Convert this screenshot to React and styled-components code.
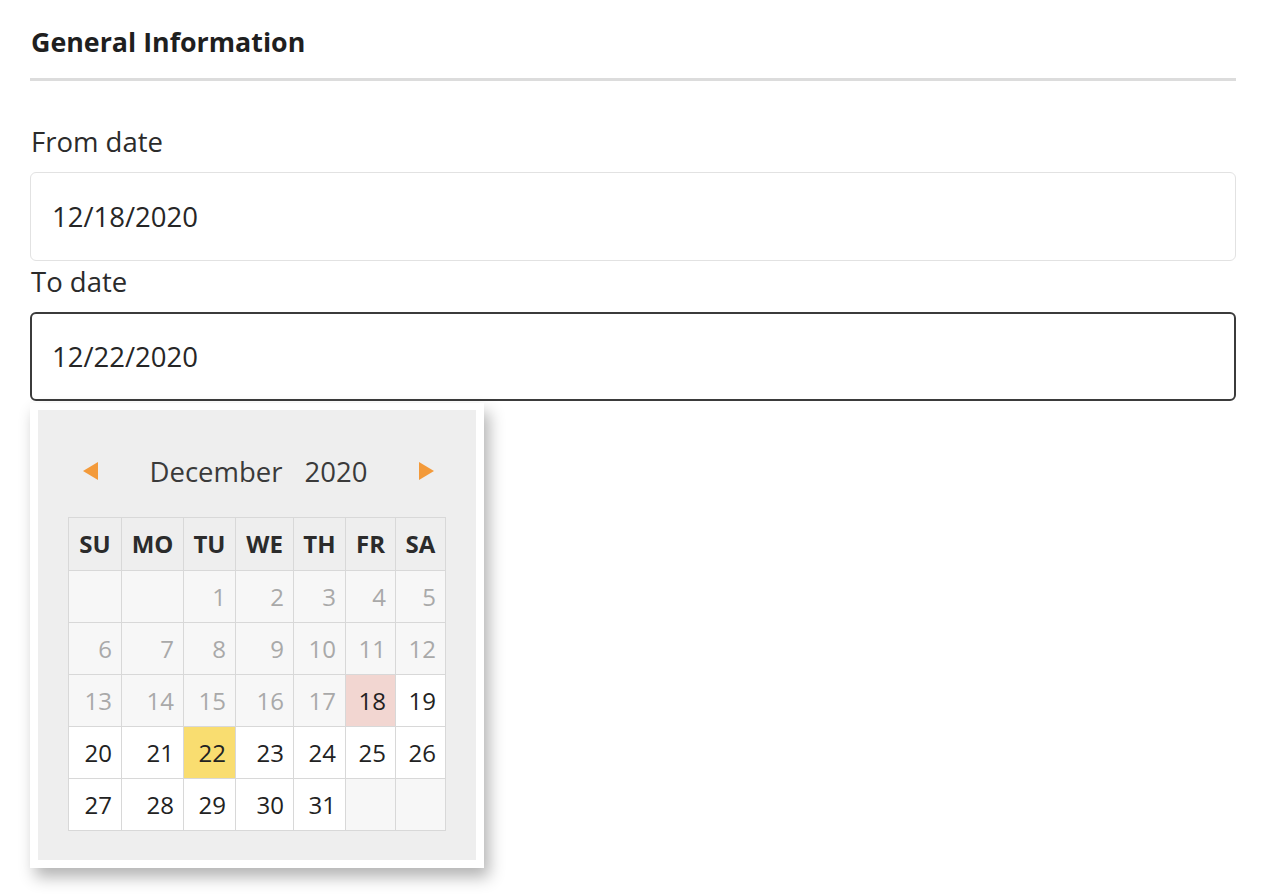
import React from "react";
import styled, { createGlobalStyle } from "styled-components";

const Global = createGlobalStyle`
  html, body { margin: 0; padding: 0; background: #fff; }
  body { font-family: "Open Sans", "Noto Sans", sans-serif; color: #262626; }
`;

const Page = styled.div`
  box-sizing: border-box;
  min-height: 894px;
  padding: 22px 44px 0 30px;
`;

const Heading = styled.h2`
  margin: 0;
  font-size: 26.8px;
  font-weight: 700;
  line-height: 40px;
  color: #1f1f1f;
  padding-left: 1px;
`;

const Divider = styled.div`
  height: 3px;
  background: #dcdcdc;
  margin-top: 16px;
`;

const Field = styled.div`
  position: relative;
  display: flex;
  flex-direction: column;
  margin-top: ${(p) => p.$top}px;
`;

const Label = styled.label`
  font-size: 27.5px;
  line-height: 36px;
  color: #2b2b2b;
  padding-left: 1px;
  margin-bottom: 12px;
`;

const Input = styled.div`
  box-sizing: border-box;
  height: 89px;
  border: ${(p) => (p.$focused ? "2px solid #3b3b3b" : "1px solid #e2e2e2")};
  border-radius: 6px;
  display: flex;
  align-items: center;
  padding-left: ${(p) => (p.$focused ? 20 : 21)}px;
  font-size: 27.5px;
  color: #262626;
`;

const Popup = styled.div`
  position: absolute;
  z-index: 10;
  left: 0;
  top: calc(100% + 2px);
  width: 454px;
  box-sizing: border-box;
  padding: 7px 8px 8px;
  background: #fff;
  box-shadow: 5px 9px 15px rgba(0, 0, 0, 0.3);
`;

const Inner = styled.div`
  background: #eeeeee;
  padding: 31px 31px 29px 30px;
`;

const CalHeader = styled.div`
  height: 60px;
  margin-bottom: 16px;
  display: flex;
  align-items: center;
  justify-content: space-between;
  padding: 0 11px 0 15px;
`;

const Arrow = styled.span`
  width: 0;
  height: 0;
  border-top: 9px solid transparent;
  border-bottom: 9px solid transparent;
  border-right: ${(p) => (p.$dir === "left" ? "15px solid #f39a3a" : "0")};
  border-left: ${(p) => (p.$dir === "left" ? "0" : "15px solid #f39a3a")};
`;

const Title = styled.div`
  font-size: 27.5px;
  color: #3a3a3a;
  word-spacing: 15px;
`;

const Table = styled.table`
  border-collapse: collapse;
  table-layout: fixed;
  width: 377px;
`;

const Th = styled.th`
  height: 52px;
  padding: 0;
  border: 1px solid #d8d8d8;
  background: #eeeeee;
  font-size: 24px;
  line-height: 28px;
  font-weight: 700;
  color: #2b2b2b;
  text-align: center;
  vertical-align: middle;
`;

const Td = styled.td`
  box-sizing: border-box;
  height: 52px;
  padding: 0 9px 0 0;
  border: 1px solid #d8d8d8;
  text-align: right;
  font-size: 24px;
  background: ${(p) =>
    p.$kind === "start"
      ? "#f2d6d1"
      : p.$kind === "selected"
      ? "#f9dd70"
      : p.$kind === "active"
      ? "#ffffff"
      : "#f7f7f7"};
  color: ${(p) => (p.$kind === "disabled" ? "#a9a9a9" : "#222")};
`;

const widths = [53, 62, 52, 58, 52, 50, 50];
const days = ["SU", "MO", "TU", "WE", "TH", "FR", "SA"];

const cells = [];
for (let i = 0; i < 2; i++) cells.push(null);
for (let d = 1; d <= 31; d++) cells.push(d);
while (cells.length < 35) cells.push(null);
const weeks = [];
for (let i = 0; i < cells.length; i += 7) weeks.push(cells.slice(i, i + 7));

const kindOf = (d) => {
  if (d === null) return "empty";
  if (d < 18) return "disabled";
  if (d === 18) return "start";
  if (d === 22) return "selected";
  return "active";
};

function Calendar() {
  return (
    <Popup>
      <Inner>
        <CalHeader>
          <Arrow $dir="left" />
          <Title>December 2020</Title>
          <Arrow $dir="right" />
        </CalHeader>
        <Table>
          <colgroup>
            {widths.map((w, i) => (
              <col key={i} style={{ width: w }} />
            ))}
          </colgroup>
          <thead>
            <tr>
              {days.map((d) => (
                <Th key={d}>{d}</Th>
              ))}
            </tr>
          </thead>
          <tbody>
            {weeks.map((w, i) => (
              <tr key={i}>
                {w.map((d, j) => (
                  <Td key={j} $kind={kindOf(d)}>
                    {d === null ? "" : d}
                  </Td>
                ))}
              </tr>
            ))}
          </tbody>
        </Table>
      </Inner>
    </Popup>
  );
}

export default function App() {
  return (
    <>
      <Global />
      <Page>
        <Heading>General Information</Heading>
        <Divider />
        <Field $top={43}>
          <Label>From date</Label>
          <Input>12/18/2020</Input>
        </Field>
        <Field $top={3}>
          <Label>To date</Label>
          <Input $focused>12/22/2020</Input>
          <Calendar />
        </Field>
      </Page>
    </>
  );
}
